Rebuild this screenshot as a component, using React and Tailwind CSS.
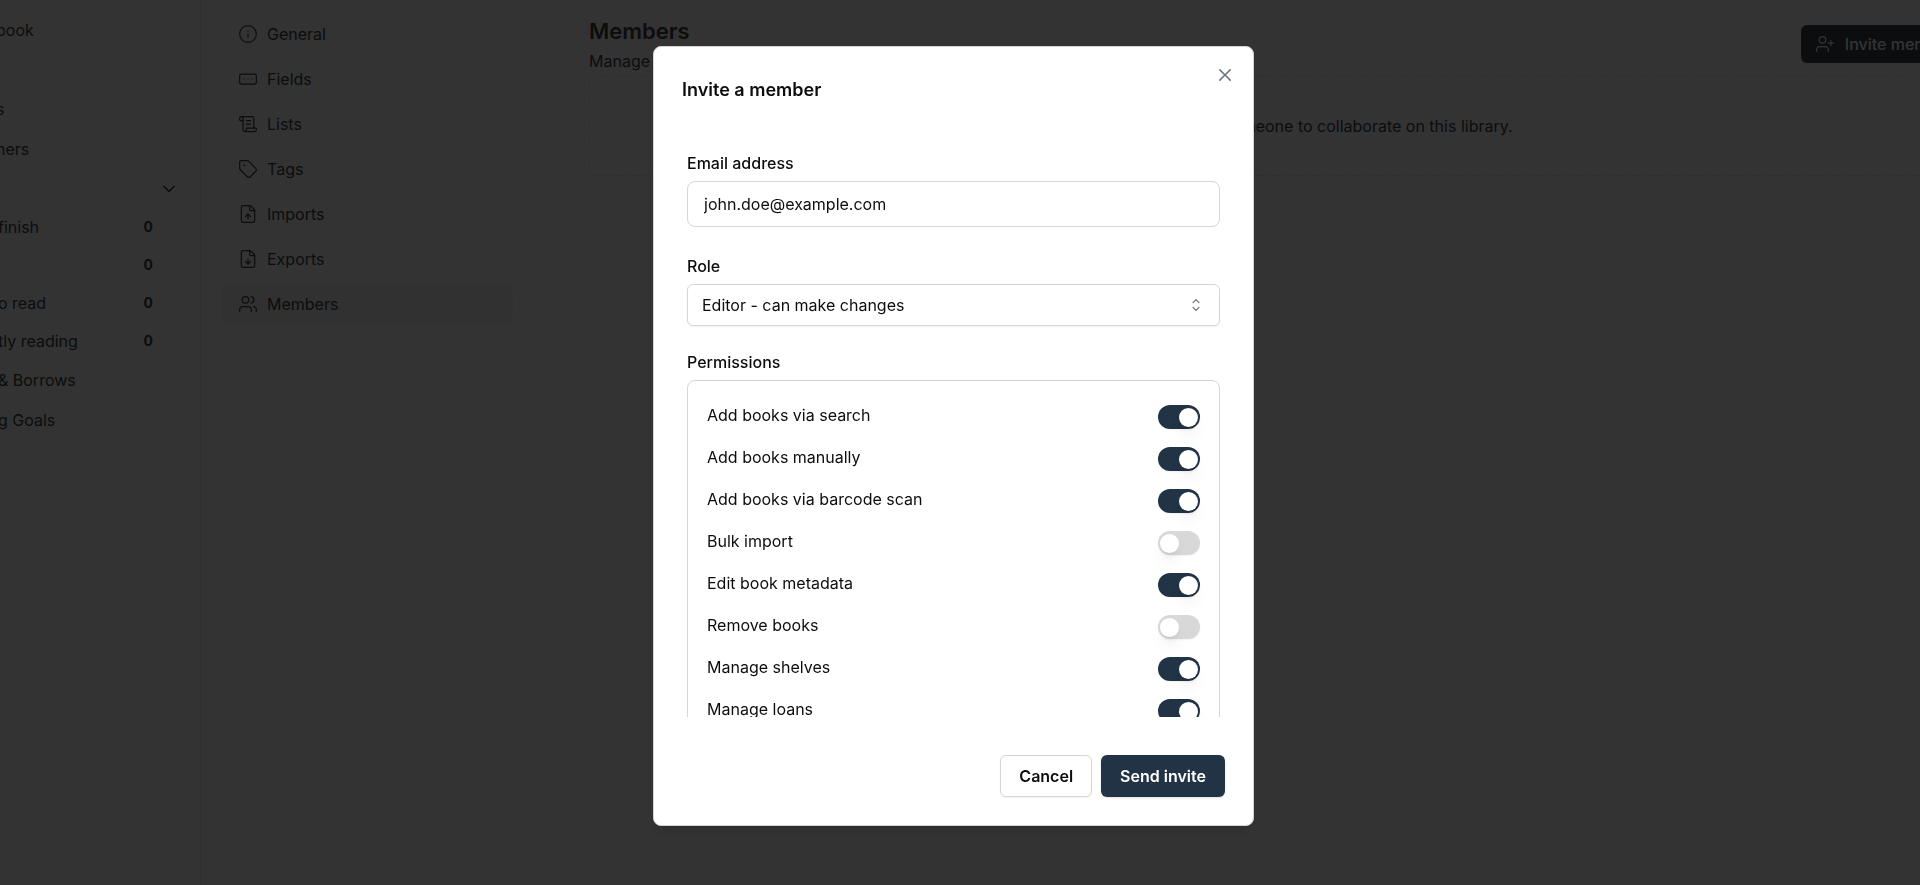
import React, { useState } from 'react';
import { ChevronDown, FileDown, FileUp, Info, RectangleEllipsis, ScrollText, Tag, UserPlus, Users } from 'lucide-react';
import { RxCaretSort, RxCross2 } from 'react-icons/rx';
import { clsx } from 'clsx';

const libraryLinks = [
  { label: 'book', gap: 'mb-[55px]' },
  { label: 's', gap: 'mb-4' },
  { label: 'ners', gap: 'mb-4' },
];

const shelves = ['finish', '', 'o read', 'tly reading'];

const settingsLinks = [
  { label: 'General', icon: Info },
  { label: 'Fields', icon: RectangleEllipsis },
  { label: 'Lists', icon: ScrollText },
  { label: 'Tags', icon: Tag },
  { label: 'Imports', icon: FileUp },
  { label: 'Exports', icon: FileDown },
  { label: 'Members', icon: Users, active: true },
];

const defaultPermissions = [
  { id: 'search', label: 'Add books via search', enabled: true },
  { id: 'manual', label: 'Add books manually', enabled: true },
  { id: 'barcode', label: 'Add books via barcode scan', enabled: true },
  { id: 'bulk', label: 'Bulk import', enabled: false },
  { id: 'metadata', label: 'Edit book metadata', enabled: true },
  { id: 'remove', label: 'Remove books', enabled: false },
  { id: 'shelves', label: 'Manage shelves', enabled: true },
  { id: 'loans', label: 'Manage loans', enabled: true },
];

const LibrarySidebar = () => (
  <aside className="w-[201px] shrink-0 border-r border-gray-200 pt-[18px]">
    <nav className="-ml-1 flex flex-col">
      {libraryLinks.map(({ label, gap }) => (
        <a key={label} href="#" className={clsx('leading-6', gap)}>{label}</a>
      ))}
      <button type="button" aria-label="Toggle shelves" className="mr-[21px] flex h-6 items-center justify-end">
        <ChevronDown className="size-5" strokeWidth={2} />
      </button>
      <div className="mt-[7px] flex flex-col pl-0.5">
        {shelves.map((label, i) => (
          <a key={i} href="#" className="flex h-[38px] items-center justify-between pr-[47px]">
            <span>{label}</span>
            <span className="text-sm font-bold">0</span>
          </a>
        ))}
        <a href="#" className="mt-2 leading-6">&amp; Borrows</a>
        <a href="#" className="mt-4 leading-6">g Goals</a>
      </div>
    </nav>
  </aside>
);

const SettingsNav = () => (
  <nav className="ml-5 mt-[14px] flex w-[292px] shrink-0 flex-col gap-[5px]">
    {settingsLinks.map(({ label, icon: Icon, active }) => (
      <a
        key={label}
        href="#"
        className={clsx('flex h-10 items-center gap-[9px] rounded-md px-[17px]', active && 'bg-gray-100')}
      >
        <Icon className="size-5" strokeWidth={1.5} />
        <span>{label}</span>
      </a>
    ))}
  </nav>
);

const Toggle = ({ id, checked, onChange }) => (
  <span className="relative mt-1 flex h-6 w-[42px]">
    <input
      id={id}
      type="checkbox"
      role="switch"
      checked={checked}
      onChange={onChange}
      className="peer h-6 w-[42px] appearance-none rounded-full bg-[#d8d8d8] shadow-xs checked:bg-[#223345]"
    />
    <span className="pointer-events-none absolute left-0.5 top-[3px] size-[19px] rounded-full bg-white shadow-lg peer-checked:left-[21px]" />
  </span>
);

const InviteDialog = () => {
  const [email, setEmail] = useState('john.doe@example.com');
  const [role, setRole] = useState('editor');
  const [permissions, setPermissions] = useState(defaultPermissions);

  const togglePermission = (id) => {
    setPermissions(permissions.map(p => (p.id === id ? { ...p, enabled: !p.enabled } : p)));
  };

  return (
    <div
      role="dialog"
      aria-modal="true"
      aria-labelledby="invite-title"
      className="relative flex w-[601px] flex-col rounded-lg border border-gray-300 bg-white px-7 pb-7 pt-[27px] shadow-lg"
    >
      <h2 id="invite-title" className="text-lg font-semibold leading-8">Invite a member</h2>
      <button type="button" aria-label="Close" className="absolute right-[18px] top-[18px] text-gray-500">
        <RxCross2 className="size-5" />
      </button>

      {/* Scrollable form body */}
      <div className="mt-[45px] h-[566px] overflow-hidden px-[5px]">
        <label htmlFor="email" className="block font-medium leading-6">Email address</label>
        <input
          id="email"
          type="email"
          value={email}
          onChange={(e) => setEmail(e.target.value)}
          className="mt-1.5 block h-[46px] w-full rounded-lg border border-[#d6d6d6] px-4"
        />

        <label htmlFor="role" className="mt-[27px] block font-medium leading-6">Role</label>
        <div className="relative mt-1.5">
          <select
            id="role"
            value={role}
            onChange={(e) => setRole(e.target.value)}
            className="block h-[42px] w-full appearance-none rounded-md border border-[#d6d6d6] bg-white px-3.5 shadow-xs"
          >
            <option value="editor">Editor - can make changes</option>
          </select>
          <RxCaretSort className="pointer-events-none absolute right-3.5 top-[11px] size-5 text-gray-500" />
        </div>

        <p className="mt-6 font-medium leading-6">Permissions</p>
        <div className="mt-1.5 flex flex-col gap-3.5 rounded-lg border border-[#d6d6d6] px-[19px] py-5">
          {permissions.map(({ id, label, enabled }) => (
            <div key={id} className="flex h-7 items-start justify-between">
              <label htmlFor={id} className="leading-7">{label}</label>
              <Toggle id={id} checked={enabled} onChange={() => togglePermission(id)} />
            </div>
          ))}
        </div>
      </div>

      <div className="mt-[38px] flex justify-end gap-[9px]">
        <button type="button" className="h-[42px] rounded-md border border-[#d6d6d6] bg-white px-[18px] font-semibold shadow-xs">
          Cancel
        </button>
        <button type="button" className="h-[42px] rounded-md bg-[#223345] px-[19px] font-semibold text-white shadow-sm">
          Send invite
        </button>
      </div>
    </div>
  );
};

const App = () => (
  <div className="min-h-screen overflow-hidden bg-white font-['Inter',sans-serif] text-base text-[#0d0d0d]">
    <div className="flex min-h-screen text-[#404448]">
      <LibrarySidebar />
      <SettingsNav />
      <main className="-mr-12 ml-[76px] flex-1 pt-[15px]">
        <div className="flex items-start justify-between">
          <div>
            <h1 className="text-[22px] font-semibold leading-8">Members</h1>
            <p className="leading-[29px]">Manage members</p>
          </div>
          <button type="button" className="mt-[10px] flex h-[38px] items-center gap-2.5 rounded-md bg-[#39404a] px-3.5 font-medium text-white">
            <UserPlus className="size-5" strokeWidth={1.5} />
            Invite member
          </button>
        </div>
        <div className="flex h-[100px] items-center justify-center rounded-md border border-dashed border-gray-200">
          No members yet. Invite someone to collaborate on this library.
        </div>
      </main>
    </div>

    {/* Backdrop */}
    <div className="fixed inset-0 flex items-start justify-center overflow-hidden bg-black/80 pr-[13px] pt-[46px]">
      <InviteDialog />
    </div>
  </div>
);

export default App;
